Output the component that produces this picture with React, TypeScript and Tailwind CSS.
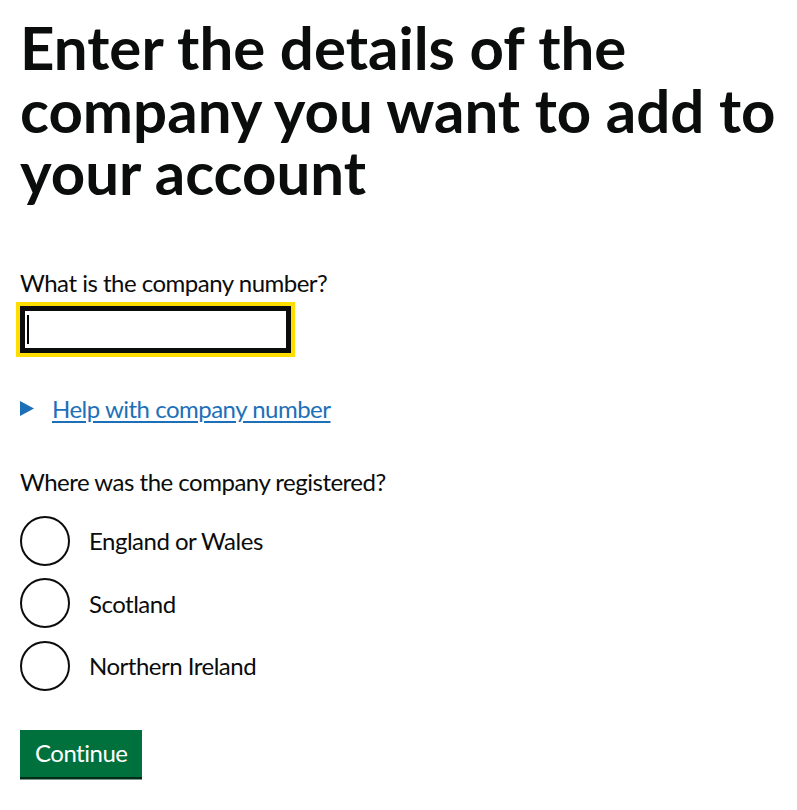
import React from 'react';

const options = ['England or Wales', 'Scotland', 'Northern Ireland'];

export default function App() {
  return (
    <div className="min-h-screen bg-white text-[#0b0c0c] font-['Lato',sans-serif] px-[20px] pt-[16px]">
      <h1 className="text-[60px] leading-[62.5px] font-bold whitespace-nowrap">
        Enter the details of the
        <br />
        company you want to add to
        <br />
        your account
      </h1>

      <form className="mt-[63px] tracking-[-0.5px]">
        <label htmlFor="company-number" className="block text-[24px] leading-[31px]">
          What is the company number?
        </label>
        <div className="relative mt-[8px] w-[271px]">
          <input
            id="company-number"
            type="text"
            className="block w-[271px] h-[47px] border-[5px] border-[#0b0c0c] ring-4 ring-[#ffdd00] outline-none caret-transparent bg-white"
          />
          <span className="absolute left-[7px] top-[9px] w-[1.5px] h-[29px] bg-black" />
        </div>

        <div className="mt-[40px] flex items-center">
          <svg width="14" height="15" viewBox="0 0 14 15" className="mr-[18px] mt-[1px]">
            <polygon points="0,0 14,7.5 0,15" fill="#1d70b8" />
          </svg>
          <a href="#" className="text-[24px] leading-[31px] text-[#1d70b8] underline underline-offset-[3px] decoration-[1.5px]">
            Help with company number
          </a>
        </div>

        <fieldset className="mt-[42px]">
          <legend className="text-[24px] leading-[31px]">Where was the company registered?</legend>
          <div className="mt-[19px] flex flex-col gap-[12.5px]">
            {options.map((opt) => (
              <label key={opt} className="flex items-center">
                <span className="w-[50px] h-[50px] rounded-full border-[2.5px] border-[#0b0c0c] shrink-0" />
                <span className="ml-[19px] text-[24px] leading-[31px]">{opt}</span>
              </label>
            ))}
          </div>
        </fieldset>

        <button
          type="button"
          className="mt-[39px] bg-[#00703c] text-white text-[24px] leading-[24px] px-[15px] pt-[11px] pb-[12px] shadow-[0_2.5px_0_#002d18]"
        >
          Continue
        </button>
      </form>
    </div>
  );
}
